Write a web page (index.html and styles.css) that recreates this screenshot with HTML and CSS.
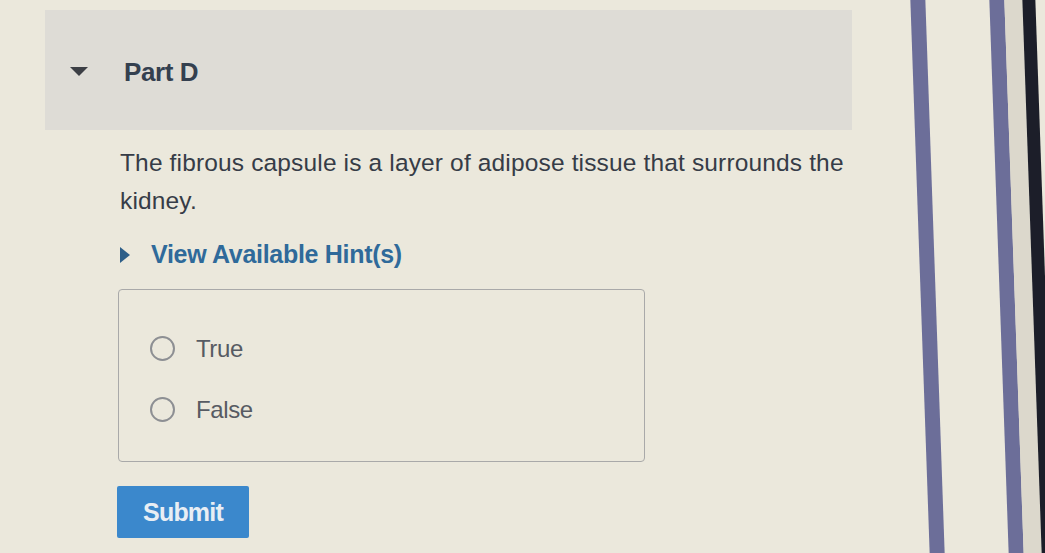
FILE: index.html
```html
<!DOCTYPE html>
<html lang="en">
<head>
    <meta charset="UTF-8">
    <meta name="viewport" content="width=device-width, initial-scale=1.0">
    <title>Part D</title>
    <link rel="stylesheet" href="styles.css">
</head>
<body>
    <main class="page">
        <div class="part-header">
            <span class="caret-down"></span>
            <h2 class="part-title">Part D</h2>
        </div>
        <div class="part-body">
            <p class="question">The fibrous capsule is a layer of adipose tissue that surrounds the kidney.</p>
            <a href="#" class="hint-link"><span class="caret-right"></span>View Available Hint(s)</a>
            <div class="answer-box">
                <label class="option"><span class="radio"></span>True</label>
                <label class="option"><span class="radio"></span>False</label>
            </div>
            <button class="submit">Submit</button>
        </div>
    </main>
    <div class="edge">
        <div class="stripe"></div>
        <div class="gap"></div>
        <div class="stripe"></div>
        <div class="pale"></div>
        <div class="dark"></div>
    </div>
</body>
</html>
```

FILE: styles.css
```css
  body {
      margin: 0;
      padding: 0;
      font-family: "Liberation Sans", Arial, sans-serif;
      background: #ebe8dc;
      display: flex;
      height: 553px;
      overflow: hidden;
  }

  .page {
      width: 875px;
      padding: 10px 0 0 45px;
  }

  .part-header {
      width: 807px;
      height: 120px;
      background: #dedcd6;
      display: flex;
      align-items: center;
      padding-left: 25px;
      box-sizing: border-box;
  }

  .caret-down {
      width: 0;
      height: 0;
      border-left: 9px solid transparent;
      border-right: 9px solid transparent;
      border-top: 9px solid #3c3f45;
      margin-right: 36px;
      margin-top: 2px;
  }

  .part-title {
      margin: 0;
      font-size: 26px;
      color: #34404f;
      letter-spacing: -0.4px;
      margin-top: 4px;
  }

  .part-body {
      padding-left: 75px;
  }

  .question {
      margin: 14px 0 0;
      width: 760px;
      font-size: 24.5px;
      line-height: 38px;
      color: #363c47;
      letter-spacing: 0.15px;
  }

  .hint-link {
      display: flex;
      align-items: center;
      margin-top: 20px;
      font-size: 25px;
      font-weight: bold;
      color: #2f6a9a;
      text-decoration: none;
      letter-spacing: -0.3px;
  }

  .caret-right {
      width: 0;
      height: 0;
      border-top: 8px solid transparent;
      border-bottom: 8px solid transparent;
      border-left: 10px solid #2d5e88;
      margin-right: 21px;
  }

  .answer-box {
      margin-top: 20px;
      margin-left: -2px;
      width: 527px;
      height: 173px;
      border: 1px solid #a9a9a9;
      border-radius: 4px;
      box-sizing: border-box;
      padding: 46px 0 0 31px;
      display: flex;
      flex-direction: column;
      gap: 36px;
  }

  .option {
      display: flex;
      align-items: center;
      font-size: 24px;
      color: #575b63;
      line-height: 25px;
      letter-spacing: -0.4px;
  }

  .radio {
      width: 21px;
      height: 21px;
      border: 2px solid #8d8f93;
      border-radius: 50%;
      margin-right: 21px;
  }

  .submit {
      margin-top: 24px;
      margin-left: -3px;
      width: 132px;
      height: 52px;
      background: #3b88cc;
      color: #e8eef4;
      border: none;
      border-radius: 2px;
      font-family: inherit;
      font-size: 25px;
      font-weight: bold;
      letter-spacing: -0.8px;
  }

  .edge {
      flex: 1;
      display: flex;
      transform: skewX(2deg);
  }

  .stripe {
      width: 15px;
      background: #6c6e99;
  }

  .gap {
      width: 64px;
  }

  .pale {
      width: 18px;
      background: #dcd8cc;
  }

  .dark {
      flex: 1;
      background: #1c1e29;
  }
```
